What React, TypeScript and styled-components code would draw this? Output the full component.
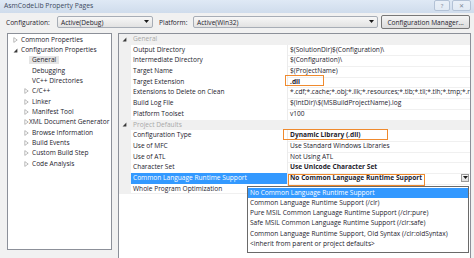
import styled, { createGlobalStyle } from 'styled-components';

const GlobalStyle = createGlobalStyle`
  html, body {
    margin: 0;
    padding: 0;
  }
  body {
    font-family: 'Open Sans', 'Noto Sans', sans-serif;
    font-size: 6.6px;
    color: #24222c;
  }
`;

type Toggle = 'open' | 'closed' | undefined;

interface TreeNode {
  label: string;
  level: number;
  toggle?: Toggle;
  selected?: boolean;
}

const treeNodes: TreeNode[] = [
  { label: 'Common Properties', level: 0, toggle: 'closed' },
  { label: 'Configuration Properties', level: 0, toggle: 'open' },
  { label: 'General', level: 1, selected: true },
  { label: 'Debugging', level: 1 },
  { label: 'VC++ Directories', level: 1 },
  { label: 'C/C++', level: 1, toggle: 'closed' },
  { label: 'Linker', level: 1, toggle: 'closed' },
  { label: 'Manifest Tool', level: 1, toggle: 'closed' },
  { label: 'XML Document Generator', level: 1, toggle: 'closed' },
  { label: 'Browse Information', level: 1, toggle: 'closed' },
  { label: 'Build Events', level: 1, toggle: 'closed' },
  { label: 'Custom Build Step', level: 1, toggle: 'closed' },
  { label: 'Code Analysis', level: 1, toggle: 'closed' },
];

interface Mark {
  left: number;
  top: number;
  width: number;
  height: number;
}

interface PropRow {
  name: string;
  value?: string;
  category?: boolean;
  bold?: boolean;
  selected?: boolean;
  mark?: Mark;
  editor?: boolean;
}

// the value of the last row sits under the open drop-down, so it is left out
const rows: PropRow[] = [
  { name: 'General', category: true },
  { name: 'Output Directory', value: '$(SolutionDir)$(Configuration)\\' },
  { name: 'Intermediate Directory', value: '$(Configuration)\\' },
  { name: 'Target Name', value: '$(ProjectName)' },
  {
    name: 'Target Extension',
    value: '.dll',
    bold: true,
    mark: { left: -3, top: -2, width: 39, height: 11 },
  },
  {
    name: 'Extensions to Delete on Clean',
    value: '*.cdf;*.cache;*.obj;*.ilk;*.resources;*.tlb;*.tli;*.tlh;*.tmp;*.rsp;*.pgc;*.pgd;*.meta',
  },
  { name: 'Build Log File', value: '$(IntDir)\\$(MSBuildProjectName).log' },
  { name: 'Platform Toolset', value: 'v100' },
  { name: 'Project Defaults', category: true },
  {
    name: 'Configuration Type',
    value: 'Dynamic Library (.dll)',
    bold: true,
    mark: { left: -5, top: -1, width: 105, height: 11 },
  },
  { name: 'Use of MFC', value: 'Use Standard Windows Libraries' },
  { name: 'Use of ATL', value: 'Not Using ATL' },
  { name: 'Character Set', value: 'Use Unicode Character Set', bold: true },
  {
    name: 'Common Language Runtime Support',
    value: 'No Common Language Runtime Support',
    bold: true,
    selected: true,
    editor: true,
    mark: { left: 0, top: 1, width: 137, height: 12 },
  },
  { name: 'Whole Program Optimization' },
];

const options = [
  'No Common Language Runtime Support',
  'Common Language Runtime Support (/clr)',
  'Pure MSIL Common Language Runtime Support (/clr:pure)',
  'Safe MSIL Common Language Runtime Support (/clr:safe)',
  'Common Language Runtime Support, Old Syntax (/clr:oldSyntax)',
  '<inherit from parent or project defaults>',
];

const ClosedArrow = () => (
  <svg width='5' height='6' viewBox='0 0 5 6'>
    <path d='M0.8 0.6 L4.2 3 L0.8 5.4 Z' fill='none' stroke='#a9a9a9' strokeWidth='0.8' />
  </svg>
);

const OpenArrow = () => (
  <svg width='5' height='5' viewBox='0 0 5 5'>
    <path d='M4.4 0.6 L4.4 4.4 L0.6 4.4 Z' fill='#3a3a3a' />
  </svg>
);

const DownArrow = () => (
  <svg width='5' height='3' viewBox='0 0 5 3'>
    <path d='M0 0 L5 0 L2.5 3 Z' fill='#1a1a1a' />
  </svg>
);

const App = () => {
  return (
    <>
      <GlobalStyle />
      <Window>
        <TitleBar>
          <TitleText>AsmCodeLib Property Pages</TitleText>
          <CaptionButton $width={16}>?</CaptionButton>
          <CaptionButton $width={19}>✕</CaptionButton>
        </TitleBar>

        <Toolbar>
          <FieldLabel $width={51}>Configuration:</FieldLabel>
          <Combo $width={96}>
            Active(Debug)
            <ComboArrow>
              <DownArrow />
            </ComboArrow>
          </Combo>
          <FieldLabel $width={34} $gap={6}>
            Platform:
          </FieldLabel>
          <Combo $width={185}>
            Active(Win32)
            <ComboArrow>
              <DownArrow />
            </ComboArrow>
          </Combo>
          <PushButton>Configuration Manager...</PushButton>
        </Toolbar>

        <Body>
          <Tree>
            {treeNodes.map((node) => (
              <TreeItem key={node.label} $level={node.level}>
                <Expander>
                  {node.toggle === 'closed' && <ClosedArrow />}
                  {node.toggle === 'open' && <OpenArrow />}
                </Expander>
                <TreeLabel $selected={node.selected}>{node.label}</TreeLabel>
              </TreeItem>
            ))}
          </Tree>

          <Grid>
            {rows.map((row) =>
              row.category ? (
                <CategoryRow key={row.name}>
                  <Gutter>
                    <OpenArrow />
                  </Gutter>
                  <CategoryName>{row.name}</CategoryName>
                </CategoryRow>
              ) : (
                <Row key={row.name}>
                  <Gutter />
                  <NameCell $selected={row.selected}>{row.name}</NameCell>
                  <ValueCell>
                    <ValueText $bold={row.bold}>{row.value}</ValueText>
                    {row.editor && (
                      <EditorButton>
                        <DownArrow />
                      </EditorButton>
                    )}
                    {row.mark && (
                      <Annotation
                        style={{
                          left: row.mark.left,
                          top: row.mark.top,
                          width: row.mark.width,
                          height: row.mark.height,
                        }}
                      />
                    )}
                  </ValueCell>
                </Row>
              )
            )}

            <DropList>
              {options.map((option, i) => (
                <DropItem key={option} $active={i === 0}>
                  {option}
                </DropItem>
              ))}
            </DropList>
          </Grid>
        </Body>
      </Window>
    </>
  );
};

const Window = styled.div`
  width: 474px;
  height: 258px;
  overflow: hidden;
  background: #f1f1f1;
  display: flex;
  flex-direction: column;
`;

const TitleBar = styled.div`
  height: 17px;
  box-sizing: border-box;
  padding: 0 3px 2px 4px;
  display: flex;
  align-items: center;
  gap: 2px;
  background: linear-gradient(#dfe9f5, #cfdcec);
`;

const TitleText = styled.div`
  flex: 1;
  font-size: 6.8px;
  color: #3d4a5e;
`;

const CaptionButton = styled.div<{ $width: number }>`
  width: ${(p) => p.$width}px;
  height: 11px;
  box-sizing: border-box;
  border: 1px solid #b3c2d6;
  border-radius: 2px;
  background: rgba(255, 255, 255, 0.35);
  display: flex;
  align-items: center;
  justify-content: center;
  font-size: 6px;
  color: #7c8696;
`;

const Toolbar = styled.div`
  height: 15px;
  margin-top: 2px;
  padding-left: 6px;
  display: flex;
  align-items: center;
`;

const FieldLabel = styled.div<{ $width: number; $gap?: number }>`
  width: ${(p) => p.$width}px;
  margin-left: ${(p) => p.$gap || 0}px;
  white-space: nowrap;
`;

const Combo = styled.div<{ $width: number }>`
  position: relative;
  width: ${(p) => p.$width}px;
  height: 12px;
  box-sizing: border-box;
  padding-left: 3px;
  border: 1px solid #a7adb6;
  border-radius: 2px;
  background: linear-gradient(#f7f7f7, #e2e2e2);
  display: flex;
  align-items: center;
`;

const ComboArrow = styled.span`
  position: absolute;
  right: 3px;
  top: 3px;
  display: flex;
`;

const PushButton = styled.div`
  width: 89px;
  height: 14px;
  margin-left: 3px;
  box-sizing: border-box;
  border: 1px solid #777;
  border-radius: 2px;
  background: linear-gradient(#f4f4f4, #dcdcdc);
  display: flex;
  align-items: center;
  justify-content: center;
  white-space: nowrap;
`;

const Body = styled.div`
  flex: 1;
  display: flex;
  align-items: flex-start;
  gap: 6px;
  padding: 4px 0 0 7px;
`;

const Tree = styled.div`
  width: 105px;
  height: 217px;
  box-sizing: border-box;
  border: 1px solid #8c9099;
  background: #fff;
  padding-top: 0.5px;
`;

const TreeItem = styled.div<{ $level: number }>`
  height: 10.35px;
  display: flex;
  align-items: center;
  padding-left: ${(p) => (p.$level === 0 ? 3 : 14)}px;
  white-space: nowrap;
`;

const Expander = styled.span`
  width: 10px;
  display: flex;
  align-items: center;
  padding-left: 2px;
  box-sizing: border-box;
`;

const TreeLabel = styled.span<{ $selected?: boolean }>`
  padding: 0 3px;
  margin-left: -3px;
  line-height: 8px;
  background: ${(p) => (p.$selected ? '#e5e5e5' : 'transparent')};
`;

const Grid = styled.div`
  position: relative;
  width: 353px;
  height: 226px;
  box-sizing: border-box;
  border: 1px solid #8c9099;
  border-bottom: none;
  background: #fff;
`;

const Row = styled.div`
  display: grid;
  grid-template-columns: 12px 157px 1fr;
  height: 10.7px;
  line-height: 10.7px;
  white-space: nowrap;
`;

const CategoryRow = styled(Row)`
  grid-template-columns: 12px 1fr;
  background: #f0f0f0;
`;

const Gutter = styled.div`
  background: #f0f0f0;
  display: flex;
  align-items: center;
  padding-left: 3px;
`;

const CategoryName = styled.div`
  padding-left: 2px;
  color: #a8a8a8;
`;

const NameCell = styled.div<{ $selected?: boolean }>`
  padding-left: 2px;
  box-sizing: border-box;
  border-right: 1px solid #ececec;
  border-bottom: 1px solid #f0f0f0;
  background: ${(p) => (p.$selected ? '#3399ff' : '#fff')};
  color: ${(p) => (p.$selected ? '#fff' : 'inherit')};
  overflow: hidden;
`;

const ValueCell = styled.div`
  position: relative;
  min-width: 0;
  box-sizing: border-box;
  border-bottom: 1px solid #f0f0f0;
  display: flex;
`;

const ValueText = styled.span<{ $bold?: boolean }>`
  flex: 1;
  padding-left: 2px;
  overflow: hidden;
  font-weight: ${(p) => (p.$bold ? 700 : 400)};
`;

const EditorButton = styled.span`
  width: 8px;
  height: 8px;
  margin: 1px 1px 0 0;
  box-sizing: border-box;
  border: 1px solid #9a9a9a;
  background: linear-gradient(#f8f8f8, #dedede);
  display: flex;
  align-items: center;
  justify-content: center;
`;

const Annotation = styled.span`
  position: absolute;
  box-sizing: border-box;
  border: 1.6px solid #ef8a2e;
  pointer-events: none;
`;

const DropList = styled.div`
  position: absolute;
  left: 128px;
  top: 152px;
  width: 222px;
  height: 67px;
  box-sizing: border-box;
  border: 1px solid #6a6a6a;
  background: #fff;
  padding-top: 0.5px;
`;

const DropItem = styled.div<{ $active?: boolean }>`
  height: 10.25px;
  line-height: 10.25px;
  padding-left: 2px;
  white-space: nowrap;
  background: ${(p) => (p.$active ? '#3399ff' : 'transparent')};
  color: ${(p) => (p.$active ? '#fff' : 'inherit')};
`;

export default App;
